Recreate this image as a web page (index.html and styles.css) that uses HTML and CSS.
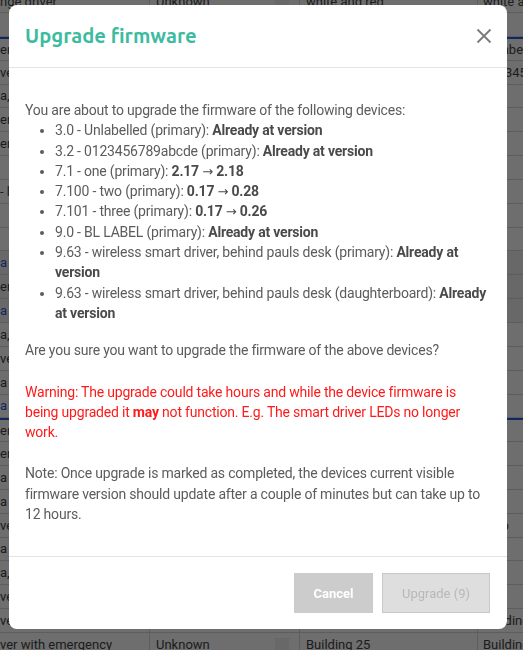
FILE: index.html
```html
<!DOCTYPE html>
<html>
<head>
<meta charset="utf-8">
<link rel="stylesheet" href="styles.css">
</head>
<body>
<div class="table">
  <div class="row first"><div class="c c1">nge driver</div><div class="c c2">Unknown<span class="dd"></span></div><div class="c c3">white and red</div><div class="c c4">white and red</div></div>
  <div class="row"><div class="c c1"></div><div class="c c2"></div><div class="c c3"></div><div class="c c4"></div></div>
  <div class="row blue"><div class="c c1">er</div><div class="c c2"></div><div class="c c3"></div><div class="c c4">Unlabelled</div></div>
  <div class="row"><div class="c c1">ve</div><div class="c c2"></div><div class="c c3"></div><div class="c c4">012345</div></div>
  <div class="row"><div class="c c1">a, v</div><div class="c c2"></div><div class="c c3"></div><div class="c c4"></div></div>
  <div class="row"><div class="c c1">er</div><div class="c c2"></div><div class="c c3"></div><div class="c c4"></div></div>
  <div class="row"><div class="c c1">er</div><div class="c c2"></div><div class="c c3"></div><div class="c c4">dev</div></div>
  <div class="row"><div class="c c1"></div><div class="c c2"></div><div class="c c3"></div><div class="c c4"></div></div>
  <div class="row"><div class="c c1">- l</div><div class="c c2"></div><div class="c c3"></div><div class="c c4">e re</div></div>
  <div class="row"><div class="c c1"></div><div class="c c2"></div><div class="c c3"></div><div class="c c4"></div></div>
  <div class="row"><div class="c c1"></div><div class="c c2"></div><div class="c c3"></div><div class="c c4">e</div></div>
  <div class="row lite"><div class="c c1"><span class="lnk">a L</span></div><div class="c c2"></div><div class="c c3"></div><div class="c c4">bel</div></div>
  <div class="row lite"><div class="c c1">er</div><div class="c c2"></div><div class="c c3"></div><div class="c c4">levi</div></div>
  <div class="row lite"><div class="c c1"><span class="lnk">a L</span></div><div class="c c2"></div><div class="c c3"></div><div class="c c4">bel</div></div>
  <div class="row"><div class="c c1">a, v</div><div class="c c2"></div><div class="c c3"></div><div class="c c4">ABI</div></div>
  <div class="row"><div class="c c1">ve</div><div class="c c2"></div><div class="c c3"></div><div class="c c4">less</div></div>
  <div class="row"><div class="c c1">a c</div><div class="c c2"></div><div class="c c3"></div><div class="c c4">con</div></div>
  <div class="row"><div class="c c1"><span class="lnk">a L</span></div><div class="c c2"></div><div class="c c3"></div><div class="c c4">et B</div></div>
  <div class="row blue"><div class="c c1">er</div><div class="c c2"></div><div class="c c3"></div><div class="c c4"><u>2</u></div></div>
  <div class="row"><div class="c c1">er</div><div class="c c2"></div><div class="c c3"></div><div class="c c4">bel</div></div>
  <div class="row"><div class="c c1">a c</div><div class="c c2"></div><div class="c c3"></div><div class="c c4"></div></div>
  <div class="row"><div class="c c1">a c</div><div class="c c2"></div><div class="c c3"></div><div class="c c4">fas</div></div>
  <div class="row"><div class="c c1">ve</div><div class="c c2"></div><div class="c c3"></div><div class="c c4">erdo</div></div>
  <div class="row"><div class="c c1">a c</div><div class="c c2"></div><div class="c c3"></div><div class="c c4">ller</div></div>
  <div class="row"><div class="c c1">a, n</div><div class="c c2"></div><div class="c c3"></div><div class="c c4">rob</div></div>
  <div class="row"><div class="c c1">ve</div><div class="c c2"></div><div class="c c3"></div><div class="c c4">La</div></div>
  <div class="row"><div class="c c1">ve</div><div class="c c2"></div><div class="c c3"></div><div class="c c4">Building</div></div>
  <div class="row"><div class="c c1">ver with emergency</div><div class="c c2">Unknown<span class="dd"></span></div><div class="c c3">Building 25</div><div class="c c4">Building 25</div></div>
</div>

<div class="overlay">
  <div class="modal">
    <div class="modal-header">
      <h2 class="title">Upgrade firmware</h2>
      <svg class="close" width="16" height="16" viewBox="0 0 16 16"><path d="M1.5 1.5L14.5 14.5M14.5 1.5L1.5 14.5" stroke="#7a7a7a" stroke-width="1.8" fill="none"/></svg>
    </div>
    <div class="modal-body">
      <p class="intro">You are about to upgrade the firmware of the following devices:</p>
      <ul class="devices">
        <li>3.0 - Unlabelled (primary): <b>Already at version</b></li>
        <li>3.2 - 0123456789abcde (primary): <b>Already at version</b></li>
        <li>7.1 - one (primary): <b>2.17 <span class="arr">→</span> 2.18</b></li>
        <li>7.100 - two (primary): <b>0.17 <span class="arr">→</span> 0.28</b></li>
        <li>7.101 - three (primary): <b>0.17 <span class="arr">→</span> 0.26</b></li>
        <li>9.0 - BL LABEL (primary): <b>Already at version</b></li>
        <li>9.63 - wireless smart driver, behind pauls desk (primary): <b>Already at version</b></li>
        <li>9.63 - wireless smart driver, behind pauls desk (daughterboard): <b>Already at version</b></li>
      </ul>
      <p class="confirm">Are you sure you want to upgrade the firmware of the above devices?</p>
      <p class="warning">Warning: The upgrade could take hours and while the device firmware is being upgraded it <b>may</b> not function. E.g. The smart driver LEDs no longer work.</p>
      <p class="note">Note: Once upgrade is marked as completed, the devices current visible firmware version should update after a couple of minutes but can take up to 12 hours.</p>
    </div>
    <div class="modal-footer">
      <button class="btn cancel">Cancel</button>
      <button class="btn upgrade">Upgrade (9)</button>
    </div>
  </div>
</div>
</body>
</html>
```
FILE: styles.css
```css
* { box-sizing: border-box; }
html, body { margin: 0; padding: 0; }
body {
  width: 523px;
  height: 650px;
  overflow: hidden;
  font-family: Roboto, "Liberation Sans", sans-serif;
  background: #fff;
}
.table {
  display: flex;
  flex-direction: column;
  margin-top: -10px;
}
.row {
  display: grid;
  grid-template-columns: 150px 150px 178px 120px;
  height: 23.85px;
  flex: none;
  border-bottom: 1px solid #d8d8d8;
  font-size: 13px;
  color: #444;
}
.row.first { height: 23px; }
.row.blue { border-top: 2px solid #2a5bd7; }
.row.lite { background: #f2f2f2; }
.c {
  border-right: 1px solid #d8d8d8;
  padding: 0 6px;
  display: flex;
  align-items: center;
  white-space: nowrap;
  overflow: hidden;
}
.c1 { padding-left: 0; }
.c4 { padding-left: 5px; }
.c2 { justify-content: space-between; }
.dd {
  width: 14px;
  height: 12px;
  background: #f0f0f0;
  margin-right: 4px;
}
.lnk { color: #2a5bd7; }
.overlay {
  position: fixed;
  inset: 0;
  background: rgba(0, 0, 0, 0.57);
}
.modal {
  margin: 5px 0 0 9px;
  width: 498px;
  height: 624px;
  background: #fff;
  border-radius: 8px;
  display: flex;
  flex-direction: column;
}
.modal-header {
  height: 63px;
  border-bottom: 1px solid #e3e3e3;
  display: flex;
  align-items: center;
  justify-content: space-between;
  padding: 0 15px 0 16px;
}
.title {
  margin: 0;
  font-family: Ubuntu, "Noto Sans", sans-serif;
  font-weight: 700;
  font-size: 20.2px;
  color: #3dbba0;
  padding-bottom: 2px;
}
.close { margin-top: -1px; }
.modal-body {
  flex: 1;
  padding: 32px 16px 0 16px;
  font-size: 14px;
  line-height: 20.3px;
  letter-spacing: -0.2px;
  color: #5c5c5c;
}
.modal-body p { margin: 0; }
.modal-body b { color: #4a4a4a; font-weight: 700; }
.arr {
  font-family: "DejaVu Sans", sans-serif;
  font-weight: 400;
  font-size: 13px;
  line-height: 0;
}
.devices {
  margin: 0 0 17px 0;
  padding-left: 30px;
}
.confirm { margin-bottom: 21px !important; }
.warning { color: #ff1a1a; margin-bottom: 21px !important; }
.warning b { color: #ff1a1a !important; }
.modal-footer {
  border-top: 1px solid #e3e3e3;
  height: 73px;
  display: flex;
  justify-content: flex-end;
  align-items: flex-start;
  padding: 16px 17px 0 0;
  gap: 9px;
}
.btn {
  height: 40px;
  font-family: Roboto, "Liberation Sans", sans-serif;
  font-size: 13px;
  border-radius: 0;
  padding: 0;
}
.cancel {
  width: 79px;
  background: #cccccc;
  border: none;
  color: #fff;
  font-weight: 700;
}
.upgrade {
  width: 108px;
  background: #dedede;
  border: 1px solid #c8c8c8;
  color: #b8b8b8;
  font-weight: 400;
}
```
